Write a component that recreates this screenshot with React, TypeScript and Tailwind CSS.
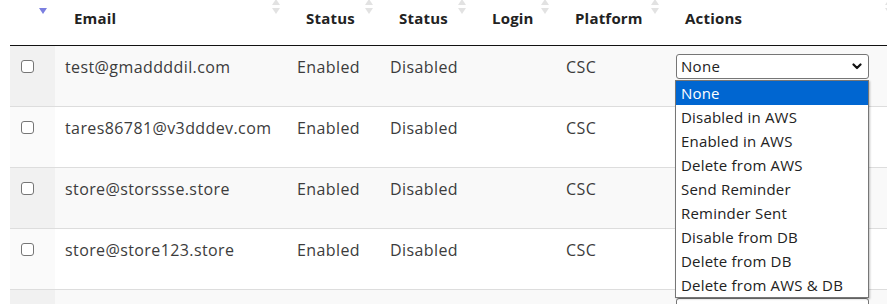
import React from 'react';

const rows = [
  { email: 'test@gmaddddil.com' },
  { email: 'tares86781@v3dddev.com' },
  { email: 'store@storssse.store' },
  { email: 'store@store123.store' },
  { email: '' },
];

const options = [
  'None',
  'Disabled in AWS',
  'Enabled in AWS',
  'Delete from AWS',
  'Send Reminder',
  'Reminder Sent',
  'Disable from DB',
  'Delete from DB',
  'Delete from AWS & DB',
];

const SortArrows: React.FC = () => (
  <svg className="absolute right-[6px] -top-[1px]" width="10" height="16" viewBox="0 0 10 16">
    <path d="M5 0 L9 6 L1 6 Z" fill="#e2e2e2" />
    <path d="M5 15 L9 9 L1 9 Z" fill="#e2e2e2" />
  </svg>
);

const Chevron: React.FC = () => (
  <svg width="10" height="7" viewBox="0 0 10 7" className="ml-auto mr-[6px]">
    <path d="M1.5 1.5 L5 5 L8.5 1.5" fill="none" stroke="#111" strokeWidth="2.2" strokeLinecap="round" strokeLinejoin="round" />
  </svg>
);

const FakeSelect: React.FC = () => (
  <div className="flex h-[25px] w-[193px] items-center rounded-[3px] border border-[#767676] bg-white pl-[4px] text-[15px] tracking-[0.3px] text-[#222]">
    <span>None</span>
    <Chevron />
  </div>
);

const headers = ['Email', 'Status', 'Status', 'Login', 'Platform', 'Actions'];

const cell = 'pl-[10px] pt-[9px] align-top text-[16px] tracking-[0.4px] text-[#3c3c3c]';

export default function App() {
  return (
    <div className="relative h-[304px] w-[887px] overflow-hidden bg-white pl-[10px] font-['Open_Sans',sans-serif]">
      <table className="w-[890px] table-fixed border-collapse text-left">
        <colgroup>
          <col className="w-[45px]" />
          <col className="w-[232px]" />
          <col className="w-[93px]" />
          <col className="w-[93px]" />
          <col className="w-[83px]" />
          <col className="w-[110px]" />
          <col className="w-[234px]" />
        </colgroup>
        <thead>
          <tr className="h-[45px] border-b border-[#111]">
            <th className="relative p-0">
              <svg className="absolute left-[29px] top-[8px]" width="8" height="6" viewBox="0 0 8 6">
                <path d="M0 0 L8 0 L4 6 Z" fill="#7b7fe0" />
              </svg>
            </th>
            {headers.map((h, i) => (
              <th key={i} className="relative pl-[19px] pt-[7px] align-top text-[15px] font-bold tracking-[0.2px] text-[#222]">
                {h}
                <SortArrows />
              </th>
            ))}
          </tr>
        </thead>
        <tbody>
          {rows.map((r, i) => {
            const odd = i % 2 === 0;
            return (
              <tr key={i} className={`h-[61px] border-t border-[#dddddd] ${odd ? 'bg-[#f9f9f9]' : 'bg-white'}`}>
                <td className={`pl-[11px] pt-[14px] align-top ${odd ? 'bg-[#f1f1f1]' : 'bg-[#fafafa]'}`}>
                  {r.email && <div className="h-[13px] w-[13px] rounded-[3px] border border-[#767676] bg-white" />}
                </td>
                <td className={cell}>{r.email}</td>
                <td className={cell}>{r.email && 'Enabled'}</td>
                <td className={cell}>{r.email && 'Disabled'}</td>
                <td className={cell}></td>
                <td className={cell}>{r.email && 'CSC'}</td>
                <td className="pl-[10px] pt-[8px] align-top">
                  <FakeSelect />
                </td>
              </tr>
            );
          })}
        </tbody>
      </table>

      <div className="absolute left-[675px] top-[80px] w-[194px] border border-[#767676] bg-white shadow-[1px_1px_2px_rgba(0,0,0,0.25)]">
        {options.map((o, i) => (
          <div
            key={o}
            className={`flex h-[24px] items-center pl-[5px] text-[15px] tracking-[0.2px] ${i === 0 ? 'bg-[#0066d1] text-white' : 'text-[#222]'}`}
          >
            {o}
          </div>
        ))}
      </div>
    </div>
  );
}
